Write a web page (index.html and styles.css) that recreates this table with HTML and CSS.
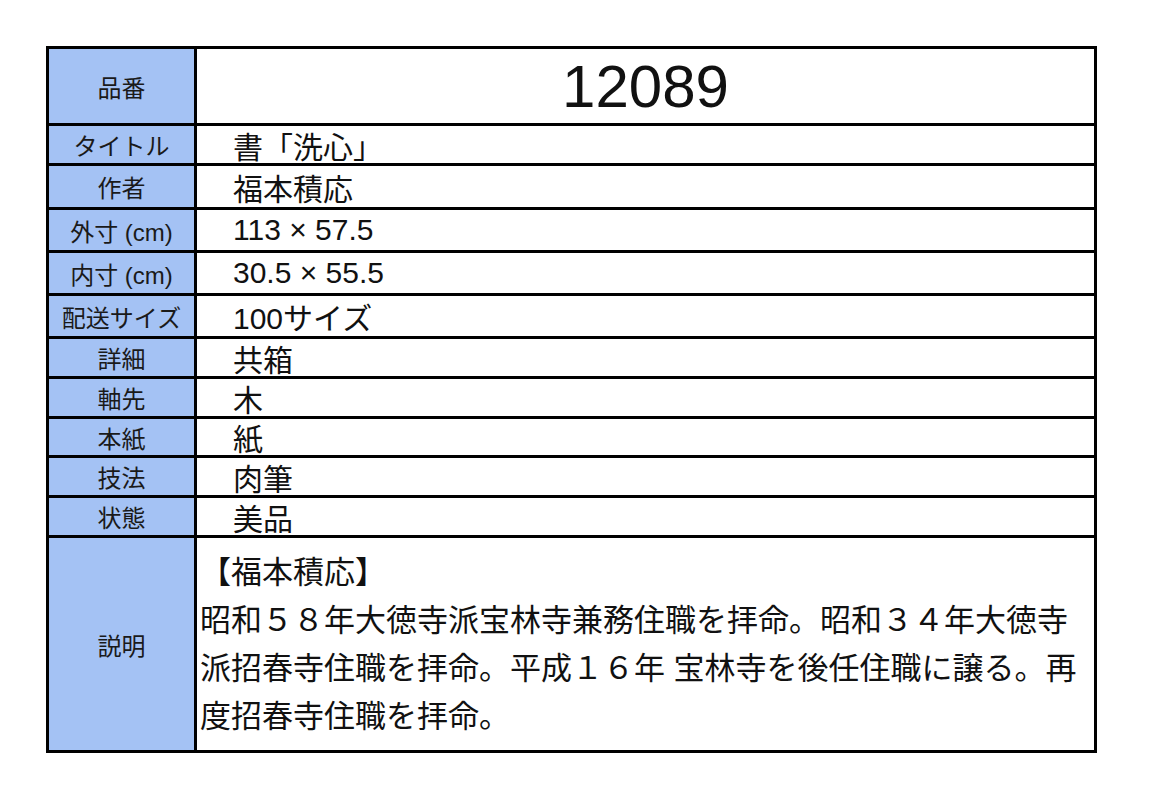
FILE: index.html
```html
<!DOCTYPE html>
<html lang="ja">
<head>
<meta charset="utf-8">
<title>12089</title>
<link rel="stylesheet" href="styles.css">
</head>
<body>
<div class="sheet">
  <div class="label">品番</div><div class="value code">12089</div>
  <div class="label">タイトル</div><div class="value">書「洗心」</div>
  <div class="label">作者</div><div class="value">福本積応</div>
  <div class="label">外寸 (cm)</div><div class="value">113 × 57.5</div>
  <div class="label">内寸 (cm)</div><div class="value">30.5 × 55.5</div>
  <div class="label">配送サイズ</div><div class="value">100サイズ</div>
  <div class="label">詳細</div><div class="value">共箱</div>
  <div class="label">軸先</div><div class="value">木</div>
  <div class="label">本紙</div><div class="value">紙</div>
  <div class="label">技法</div><div class="value">肉筆</div>
  <div class="label">状態</div><div class="value">美品</div>
  <div class="label">説明</div>
  <div class="value desc">【福本積応】<br>昭和５８年大徳寺派宝林寺兼務住職を拝命。昭和３４年大徳寺<br>派招春寺住職を拝命。平成１６年 宝林寺を後任住職に譲る。再<br>度招春寺住職を拝命。</div>
</div>
</body>
</html>
```

FILE: styles.css
```css
html, body {
  margin: 0;
  padding: 0;
  background: #ffffff;
}
body {
  font-family: "Liberation Sans", "Noto Sans CJK JP", sans-serif;
  color: #111111;
}
.sheet {
  margin: 46px 0 0 46px;
  width: 1051px;
  box-sizing: border-box;
  display: grid;
  grid-template-columns: 145px 1fr;
  grid-template-rows: 74px 37px 41px 40px 40px 40px 37px 37px 36px 37px 37px 212px;
  gap: 3px;
  padding: 3px;
  background: #000000;
}
.label {
  background: #a4c2f4;
  display: flex;
  align-items: center;
  justify-content: center;
  font-size: 24px;
  color: #1a1a1a;
  white-space: nowrap;
}
.value {
  background: #ffffff;
  display: flex;
  align-items: center;
  padding-left: 36px;
  font-size: 30px;
  white-space: nowrap;
}
.code {
  justify-content: center;
  padding-left: 0;
  font-size: 60px;
}
.desc {
  display: block;
  align-self: stretch;
  padding: 11px 0 0 3px;
  font-size: 31px;
  line-height: 48px;
  white-space: normal;
}
```
